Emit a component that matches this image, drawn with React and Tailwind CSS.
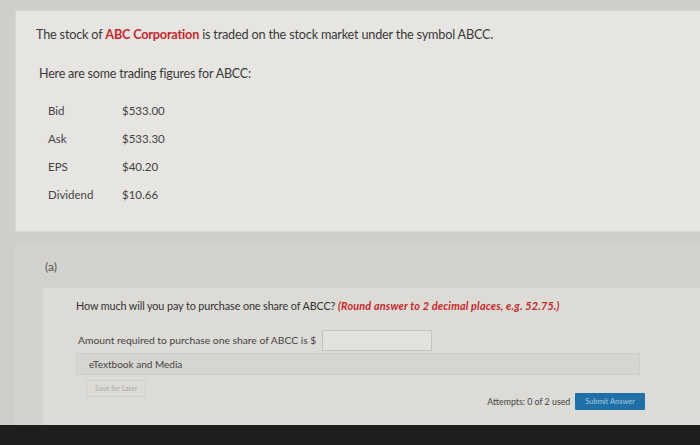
export default function App() {
  const rows = [
    ['Bid', '$533.00'],
    ['Ask', '$533.30'],
    ['EPS', '$40.20'],
    ['Dividend', '$10.66'],
  ];
  return (
    <div className="flex h-[445px] w-[700px] flex-col overflow-hidden bg-[#cfcec9] font-['Lato',sans-serif] text-[#3a3a3a]">
      <div className="flex flex-1 flex-col pl-[15px] pt-[10px]">
        <section className="h-[222px] border border-r-0 border-[#d8d7d2] bg-[#e6e5e1] pl-[20px] pt-[14px]">
          <p className="text-[12.7px] tracking-[-0.2px]">
            The stock of <span className="font-bold text-[#c8262b]">ABC Corporation</span> is traded on the stock market under the symbol ABCC.
          </p>
          <p className="mt-[21px] pl-[3px] text-[12.5px] tracking-[-0.2px]">Here are some trading figures for ABCC:</p>
          <table className="mt-[18px] ml-[12px] text-[11.5px] text-[#444]">
            <tbody>
              {rows.map(([k, v]) => (
                <tr key={k} className="h-[28px]">
                  <td className="w-[74px] align-top">{k}</td>
                  <td className="align-top">{v}</td>
                </tr>
              ))}
            </tbody>
          </table>
        </section>

        <section className="mt-[12px] flex flex-1 flex-col bg-[#d3d2cd] pl-[28px]">
          <p className="pt-[14px] pl-[2px] text-[12px] text-[#555]">(a)</p>
          <div className="mt-[12px] flex flex-1 flex-col bg-[#dcdbd6] pl-[33px] pt-[10px]">
            <p className="text-[10.8px] tracking-[-0.1px] text-[#333]">
              How much will you pay to purchase one share of ABCC?{' '}
              <span className="font-bold italic tracking-[0.2px] text-[#c8262b]">(Round answer to 2 decimal places, e.g. 52.75.)</span>
            </p>
            <div className="mt-[16px] flex items-center gap-[6px] pl-[2px] text-[10.3px] text-[#444]">
              <span>Amount required to purchase one share of ABCC is $</span>
              <div className="h-[21px] w-[110px] border border-[#c4c3be] bg-[#e2e1dc]" />
            </div>
            <div className="mt-[2px] mr-[60px] flex h-[22px] items-center rounded-[2px] border border-[#cfcec9] bg-[#d6d5d0] pl-[12px] text-[10px] text-[#444]">
              eTextbook and Media
            </div>
            <div className="mr-[55px] flex items-start justify-between pt-[5px]">
              <button className="ml-[10px] h-[17px] border border-[#d2d1cc] px-[8px] text-[7px] text-[#aaa]">Save for Later</button>
              <div className="mt-[13px] flex items-center gap-[5px]">
                <span className="text-[8.8px] text-[#444]">Attempts: 0 of 2 used</span>
                <button className="h-[17px] rounded-[1px] bg-[#1f6fa8] px-[10px] text-[7.5px] text-[#a8c8e0]">Submit Answer</button>
              </div>
            </div>
          </div>
        </section>
      </div>
      <div className="h-[20px] bg-[#1e1e1e]" />
    </div>
  );
}
